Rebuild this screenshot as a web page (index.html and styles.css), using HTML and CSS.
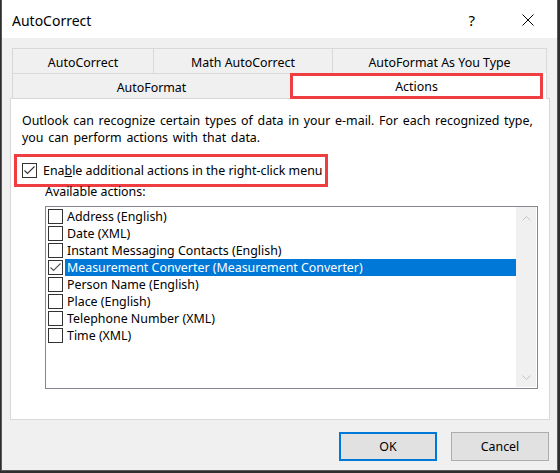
FILE: index.html
```html
<!DOCTYPE html>
<html lang="en">

<head>
    <meta charset="UTF-8">
    <meta name="viewport" content="width=device-width, initial-scale=1.0">
    <title>AutoCorrect</title>
    <link rel="stylesheet" href="styles.css">
</head>

<body>
    <div class="window">
        <div class="titlebar">
            <span class="title">AutoCorrect</span>
            <span class="help">?</span>
            <span class="close">
                <svg width="12" height="12" viewBox="0 0 12 12">
                    <path d="M0.5 0.5L11.5 11.5M11.5 0.5L0.5 11.5" stroke="#000" stroke-width="1" fill="none" />
                </svg>
            </span>
        </div>

        <div class="content">
            <div class="tabs">
                <div class="tab-row">
                    <div class="tab tab-autocorrect">AutoCorrect</div>
                    <div class="tab tab-math">Math AutoCorrect</div>
                    <div class="tab tab-typing">AutoFormat As You Type</div>
                </div>
                <div class="tab-row">
                    <div class="tab tab-autoformat">AutoFormat</div>
                    <div class="tab tab-actions selected"><span class="mark">Actions</span></div>
                </div>
            </div>

            <div class="panel">
                <p class="intro">Outlook can recognize certain types of data in your e-mail. For each recognized type,
                    you can perform actions with that data.</p>

                <label class="enable">
                    <span class="box">
                        <svg width="13" height="13" viewBox="0 0 13 13">
                            <path d="M1.5 6.5L4.5 9.5L11.5 2.5" stroke="#333" stroke-width="1.1" fill="none" />
                        </svg>
                    </span>
                    <span>Ena<u>b</u>le additional actions in the right-click menu</span>
                </label>

                <div class="caption">Available actions:</div>

                <div class="listbox">
                    <ul class="items">
                        <li><span class="box"></span><span class="label">Address (English)</span></li>
                        <li><span class="box"></span><span class="label">Date (XML)</span></li>
                        <li><span class="box"></span><span class="label">Instant Messaging Contacts (English)</span></li>
                        <li class="selected">
                            <span class="box">
                                <svg width="13" height="13" viewBox="0 0 13 13">
                                    <path d="M1.5 6.5L4.5 9.5L11.5 2.5" stroke="#555" stroke-width="1.1" fill="none" />
                                </svg>
                            </span>
                            <span class="label">Measurement Converter (Measurement Converter)</span>
                        </li>
                        <li><span class="box"></span><span class="label">Person Name (English)</span></li>
                        <li><span class="box"></span><span class="label">Place (English)</span></li>
                        <li><span class="box"></span><span class="label">Telephone Number (XML)</span></li>
                        <li><span class="box"></span><span class="label">Time (XML)</span></li>
                    </ul>
                    <div class="scrollbar">
                        <svg width="9" height="5" viewBox="0 0 9 5">
                            <path d="M0.5 4.5L4.5 0.5L8.5 4.5" stroke="#c4c4c4" stroke-width="1" fill="none" />
                        </svg>
                        <svg width="9" height="5" viewBox="0 0 9 5">
                            <path d="M0.5 0.5L4.5 4.5L8.5 0.5" stroke="#c4c4c4" stroke-width="1" fill="none" />
                        </svg>
                    </div>
                </div>
            </div>

            <div class="buttons">
                <button class="button default">OK</button>
                <button class="button">Cancel</button>
            </div>
        </div>
    </div>
</body>

</html>
```

FILE: styles.css
```css
* {
    box-sizing: border-box;
}

body {
    margin: 0;
    background: #2e2e2e;
    font-family: "Noto Sans", sans-serif;
    font-size: 12.4px;
    color: #000;
}

.window {
    width: 557px;
    height: 471px;
    margin-left: 1px;
    background: #f0f0f0;
    border: 1px solid #5a5a5a;
    border-top: none;
    display: flex;
    flex-direction: column;
}

/* title bar */

.titlebar {
    height: 38px;
    flex: none;
    background: #fff;
    display: flex;
    align-items: center;
    padding: 2px 0 0 10px;
}

.title {
    font-size: 14px;
}

.help {
    font-size: 15px;
    margin-left: auto;
    margin-right: 47px;
}

.close {
    display: flex;
    margin-right: 23px;
}

.content {
    flex: 1;
    padding: 10px 7px 0 8px;
    display: flex;
    flex-direction: column;
}

/* tabs */

.tabs {
    margin: 0 3px 0 2px;
}

.tab-row {
    display: flex;
    height: 25px;
}

.tab {
    display: flex;
    align-items: center;
    justify-content: center;
    padding-top: 2px;
    border-top: 1px solid #d9d9d9;
    border-left: 1px solid #d9d9d9;
    white-space: nowrap;
}

.tab:last-child {
    border-right: 1px solid #d9d9d9;
}

.tab-autocorrect {
    width: 141px;
}

.tab-math {
    width: 179px;
}

.tab-typing {
    flex: 1;
}

.tab-autoformat {
    width: 278px;
}

.tab-actions {
    flex: 1;
}

.tab.selected {
    background: #fff;
    border-top: none;
    border-left: none;
    padding: 0 3px 0 0;
    height: 26px;
    align-items: stretch;
    position: relative;
}

.mark {
    flex: 1;
    display: flex;
    align-items: center;
    justify-content: center;
    border: 3px solid #ef3e42;
}

/* panel */

.panel {
    background: #fff;
    border: 1px solid #d9d9d9;
    padding: 13px 11px 30px;
}

.intro {
    margin: 0;
    line-height: 17px;
    word-spacing: 1.5px;
}

.enable {
    display: flex;
    align-items: center;
    width: fit-content;
    height: 33px;
    margin: 8px 0 0 -8px;
    padding: 0 3px 0 5px;
    gap: 6px;
    border: 3px solid #ef3e42;
}

.box {
    display: block;
    flex: none;
    width: 15px;
    height: 15px;
    border: 1px solid #333;
    background: #fff;
}

.box svg {
    display: block;
}

.caption {
    margin: -4px 0 0 23px;
    line-height: 17px;
}

.listbox {
    display: flex;
    width: 493px;
    height: 183px;
    margin: 6px 0 0 23px;
    border: 1px solid #828790;
}

.items {
    flex: 1;
    list-style: none;
    margin: 0;
    padding: 1px 0 0 2px;
}

.items li {
    display: flex;
    height: 17px;
}

.items .box {
    margin-top: 1px;
}

.label {
    flex: 1;
    margin-left: 2px;
    padding-left: 2px;
    line-height: 17px;
    white-space: nowrap;
}

.selected .label {
    background: #0078d7;
    color: #fff;
}

.scrollbar {
    width: 20px;
    margin: 0 1px 1px 0;
    background: #f0f0f0;
    display: flex;
    flex-direction: column;
    align-items: center;
    justify-content: space-between;
    padding: 9px 0 7px;
}

/* dialog buttons */

.buttons {
    display: flex;
    justify-content: flex-end;
    gap: 14px;
    margin: 12px 1px 0 0;
}

.button {
    width: 98px;
    height: 29px;
    background: #e1e1e1;
    border: 1px solid #adadad;
    font-family: inherit;
    font-size: 12.4px;
    color: #000;
    padding: 0;
}

.button.default {
    border: 2px solid #0078d7;
}
```
